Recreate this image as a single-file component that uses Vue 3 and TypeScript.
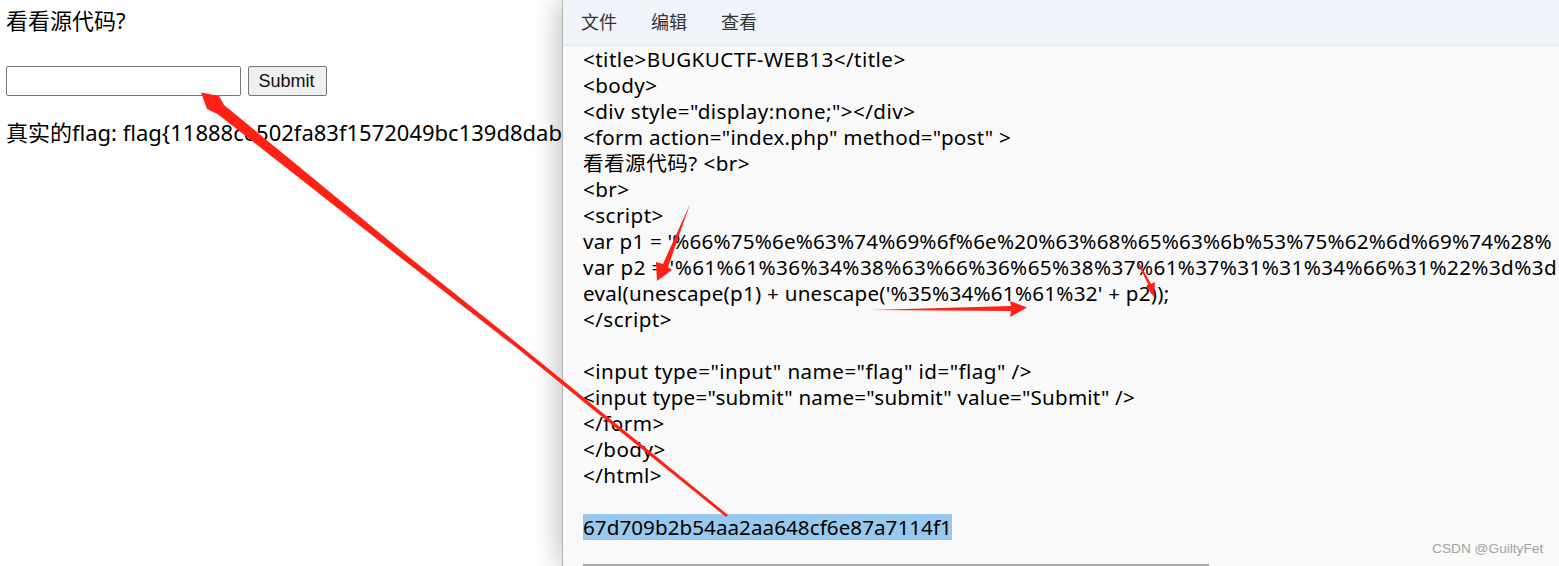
<script setup lang="ts">
interface CodeLine {
  text: string
  kind: string
}
const lines: CodeLine[] = [
  { text: '<title>BUGKUCTF-WEB13</title>', kind: 'wide' },
  { text: '<body>', kind: 'wide' },
  { text: '<div style="display:none;"></div>', kind: 'wide' },
  { text: '<form action="index.php" method="post" >', kind: 'mid' },
  { text: '看看源代码? <br>', kind: 'wide' },
  { text: '<br>', kind: 'wide' },
  { text: '<script>', kind: 'wide' },
  { text: "var p1 = '%66%75%6e%63%74%69%6f%6e%20%63%68%65%63%6b%53%75%62%6d%69%74%28%", kind: 'p1' },
  { text: "var p2 = '%61%61%36%34%38%63%66%36%65%38%37%61%37%31%31%34%66%31%22%3d%3d", kind: 'p2' },
  { text: "eval(unescape(p1) + unescape('%35%34%61%61%32' + p2));", kind: 'mid' },
  { text: '</' + 'script>', kind: 'wide' },
  { text: '\u00a0', kind: 'plain' },
  { text: '<input type="input" name="flag" id="flag" />', kind: 'wide' },
  { text: '<input type="submit" name="submit" value="Submit" />', kind: 'narrow' },
  { text: '</form>', kind: 'wide' },
  { text: '</body>', kind: 'wide' },
  { text: '</html>', kind: 'wide' },
  { text: '\u00a0', kind: 'plain' },
]
const menus: string[] = ['文件', '编辑', '查看']
const arrows: string[] = [
  '201,92.5 219,96 224,105 292.8,161.6 401.8,251.3 521.2,346.5 728,515 726,517 518.8,349.5 398.2,255.7 287.2,168.4 217.5,114 207,109',
  '690,204 668,267 672,270 657,281 656,262 663,264',
  '871,310 1011,306 1010,301 1027,307.5 1010,317 1011,311',
  '1138,264 1139.5,263.5 1151,284 1155,282 1154,297 1146,287 1148,284',
]
</script>

<template>
  <div class="screen">
    <section class="page">
      <p class="heading">看看源代码?</p>
      <form class="form" @submit.prevent>
        <input class="field" type="text" />
        <button class="submit" type="submit">Submit</button>
      </form>
      <p class="flag">真实的flag: flag{11888ce502fa83f1572049bc139d8dab</p>
    </section>
    <section class="notepad">
      <nav class="menu">
        <span v-for="m in menus" :key="m">{{ m }}</span>
      </nav>
      <div class="code">
        <div v-for="(l, i) in lines" :key="i" class="line" :class="l.kind">{{ l.text }}</div>
        <div class="line"><span class="selected">67d709b2b54aa2aa648cf6e87a7114f1</span></div>
      </div>
      <div class="scrollbar"></div>
    </section>
    <svg class="arrows" width="1559" height="566" viewBox="0 0 1559 566">
      <polygon v-for="(a, i) in arrows" :key="i" :points="a" fill="#ff2116" />
    </svg>
    <span class="mark">CSDN @GuiltyFet</span>
  </div>
</template>

<style>
html, body { margin: 0; background: #fff; }
</style>

<style scoped>
.screen {
  position: relative;
  display: flex;
  width: 1559px;
  height: 566px;
  overflow: hidden;
  background: #fff;
  color: #000;
  font-family: "Noto Sans", "Noto Sans CJK SC", sans-serif;
}
.page {
  width: 562px;
  flex: none;
  padding: 0 0 0 6px;
  box-sizing: border-box;
  overflow: hidden;
  white-space: nowrap;
  font-size: 22px;
}
.heading {
  margin: 5px 0 0;
  height: 30px;
  line-height: 30px;
}
.form {
  display: flex;
  gap: 7px;
  margin-top: 31px;
}
.field {
  width: 235px;
  height: 30px;
  box-sizing: border-box;
  margin: 0;
  border: 1px solid #767676;
  border-radius: 2px;
  background: #fff;
}
.submit {
  width: 79px;
  height: 30px;
  box-sizing: border-box;
  margin: 0;
  padding: 0 2px 0 0;
  border: 1px solid #767676;
  border-radius: 2px;
  background: #efefef;
  color: #111;
  font: 18px "Liberation Sans", sans-serif;
}
.flag {
  margin: 21px 0 0;
  height: 30px;
  line-height: 30px;
}
.notepad {
  position: relative;
  flex: 1;
  min-width: 0;
  border-left: 1px solid #b4b4b4;
  box-sizing: border-box;
  background: #f9f9f9;
  box-shadow: -3px 0 26px rgba(0, 0, 0, 0.26);
}
.menu {
  display: flex;
  gap: 34px;
  height: 46px;
  padding: 0 0 3px 18px;
  box-sizing: border-box;
  align-items: center;
  background: #f0f3f9;
  border-bottom: 1px solid #e6e6e6;
  font-size: 18px;
  color: #333;
}
.code {
  padding-left: 20px;
  overflow: hidden;
  white-space: pre;
  font-size: 20.6px;
}
.line {
  height: 26px;
  line-height: 26px;
}
.wide { letter-spacing: 0.45px; }
.mid { letter-spacing: 0.25px; }
.narrow { letter-spacing: 0.2px; }
.p1 { letter-spacing: 0.18px; }
.p2 { letter-spacing: 0.42px; }
.selected {
  display: inline-block;
  letter-spacing: 0.06px;
  background: #99c8ed;
}
.scrollbar {
  width: 626px;
  height: 2px;
  margin: 24px 0 0 20px;
  background: #a8a8a8;
}
.arrows {
  position: absolute;
  left: 0;
  top: 0;
  pointer-events: none;
}
.mark {
  position: absolute;
  left: 1432px;
  top: 541px;
  font: 13.7px/16px "Liberation Sans", sans-serif;
  color: #a3a3a3;
}
</style>
